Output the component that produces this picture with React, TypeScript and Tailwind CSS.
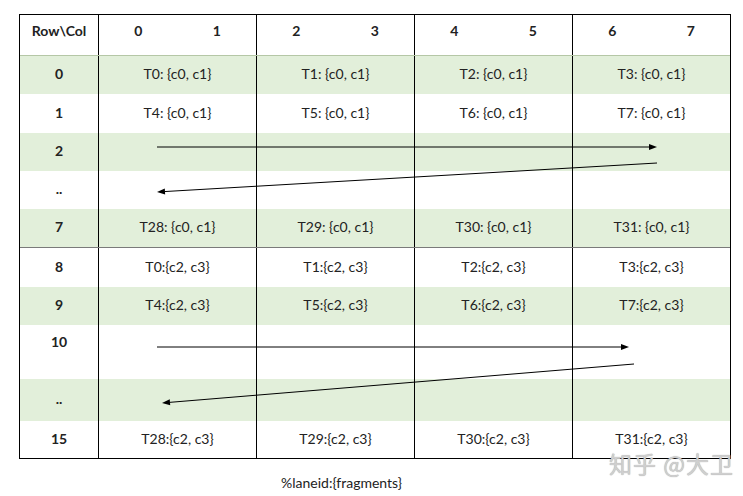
const groups = ["0 1", "2 3", "4 5", "6 7"];

type Row = { label: string; cells?: string[]; green?: boolean; h: string; top?: boolean; tall?: boolean };

const rows: Row[] = [
  { label: "0", cells: ["T0: {c0, c1}", "T1: {c0, c1}", "T2: {c0, c1}", "T3: {c0, c1}"], green: true, h: "h-[38px]" },
  { label: "1", cells: ["T4: {c0, c1}", "T5: {c0, c1}", "T6: {c0, c1}", "T7: {c0, c1}"], h: "h-[39px]" },
  { label: "2", green: true, h: "h-[38px]" },
  { label: "..", h: "h-[38px]" },
  { label: "7", cells: ["T28: {c0, c1}", "T29: {c0, c1}", "T30: {c0, c1}", "T31: {c0, c1}"], green: true, h: "h-[38px]" },
  { label: "8", cells: ["T0:{c2, c3}", "T1:{c2, c3}", "T2:{c2, c3}", "T3:{c2, c3}"], h: "h-[40px]", top: true },
  { label: "9", cells: ["T4:{c2, c3}", "T5:{c2, c3}", "T6:{c2, c3}", "T7:{c2, c3}"], green: true, h: "h-[38px]" },
  { label: "10", h: "h-[54px]", tall: true },
  { label: "..", green: true, h: "h-[42px]" },
  { label: "15", cells: ["T28:{c2, c3}", "T29:{c2, c3}", "T30:{c2, c3}", "T31:{c2, c3}"], h: "h-[37px]" },
];

function Arrow({ x1, y1, x2, y2 }: { x1: number; y1: number; x2: number; y2: number }) {
  const a = Math.atan2(y2 - y1, x2 - x1);
  const len = 8;
  const w = 3;
  const bx = x2 - len * Math.cos(a);
  const by = y2 - len * Math.sin(a);
  const px = -Math.sin(a) * w;
  const py = Math.cos(a) * w;
  return (
    <g>
      <line x1={x1} y1={y1} x2={bx} y2={by} stroke="#000" strokeWidth="1" />
      <polygon points={`${x2},${y2} ${bx + px},${by + py} ${bx - px},${by - py}`} fill="#000" />
    </g>
  );
}

export default function App() {
  return (
    <div className="relative w-[743px] h-[496px] bg-white text-[#222] font-['Lato',sans-serif] text-[14px]">
      <div className="pt-[14px] pl-[19px]">
        <div className="w-[712px] border border-black flex flex-col">
          {/* header */}
          <div className="flex h-[41px] border-b border-[#b5c7a6] font-bold">
            <div className="w-[79px] pb-[9px] border-r border-black flex items-center justify-center">Row\Col</div>
            {groups.map((g, i) => (
              <div key={g} className={`flex pb-[9px] ${i < 3 ? "w-[158px] border-r border-black" : "w-[157px]"}`}>
                {g.split(" ").map((n) => (
                  <div key={n} className="flex-1 flex items-center justify-center">{n}</div>
                ))}
              </div>
            ))}
          </div>
          {rows.map((r, ri) => (
            <div
              key={ri}
              className={`flex ${r.h} ${r.green ? "bg-[#e2efda]" : "bg-white"} ${r.top ? "border-t border-[#7a7a7a]" : ""}`}
            >
              <div
                className={`w-[79px] border-r border-black flex justify-center font-bold ${r.tall ? "items-start pt-[6px]" : "items-center pb-[3px]"}`}
              >
                {r.label}
              </div>
              {[0, 1, 2, 3].map((c) => (
                <div
                  key={c}
                  className={`flex items-center justify-center pb-[3px] ${c < 3 ? "w-[158px] border-r border-black" : "w-[157px]"}`}
                >
                  {r.cells ? r.cells[c] : ""}
                </div>
              ))}
            </div>
          ))}
        </div>
        <div className="mt-[13px] pl-[262px] text-[14px]">%laneid:{"{fragments}"}</div>
      </div>

      <svg className="absolute left-0 top-0 pointer-events-none" width="743" height="496">
        <Arrow x1={157} y1={147} x2={657} y2={147} />
        <Arrow x1={657} y1={163} x2={157} y2={192} />
        <Arrow x1={157} y1={347} x2={629} y2={347} />
        <Arrow x1={634} y1={364} x2={162} y2={403} />
      </svg>

      <div className="absolute left-[609px] top-[452px] text-[23px] leading-none tracking-[1px] text-[#cfcfcf] font-['Noto_Sans_CJK_SC',sans-serif] [text-shadow:0_0_1px_#9a9a9a]">
        知乎 @大卫
      </div>
    </div>
  );
}
